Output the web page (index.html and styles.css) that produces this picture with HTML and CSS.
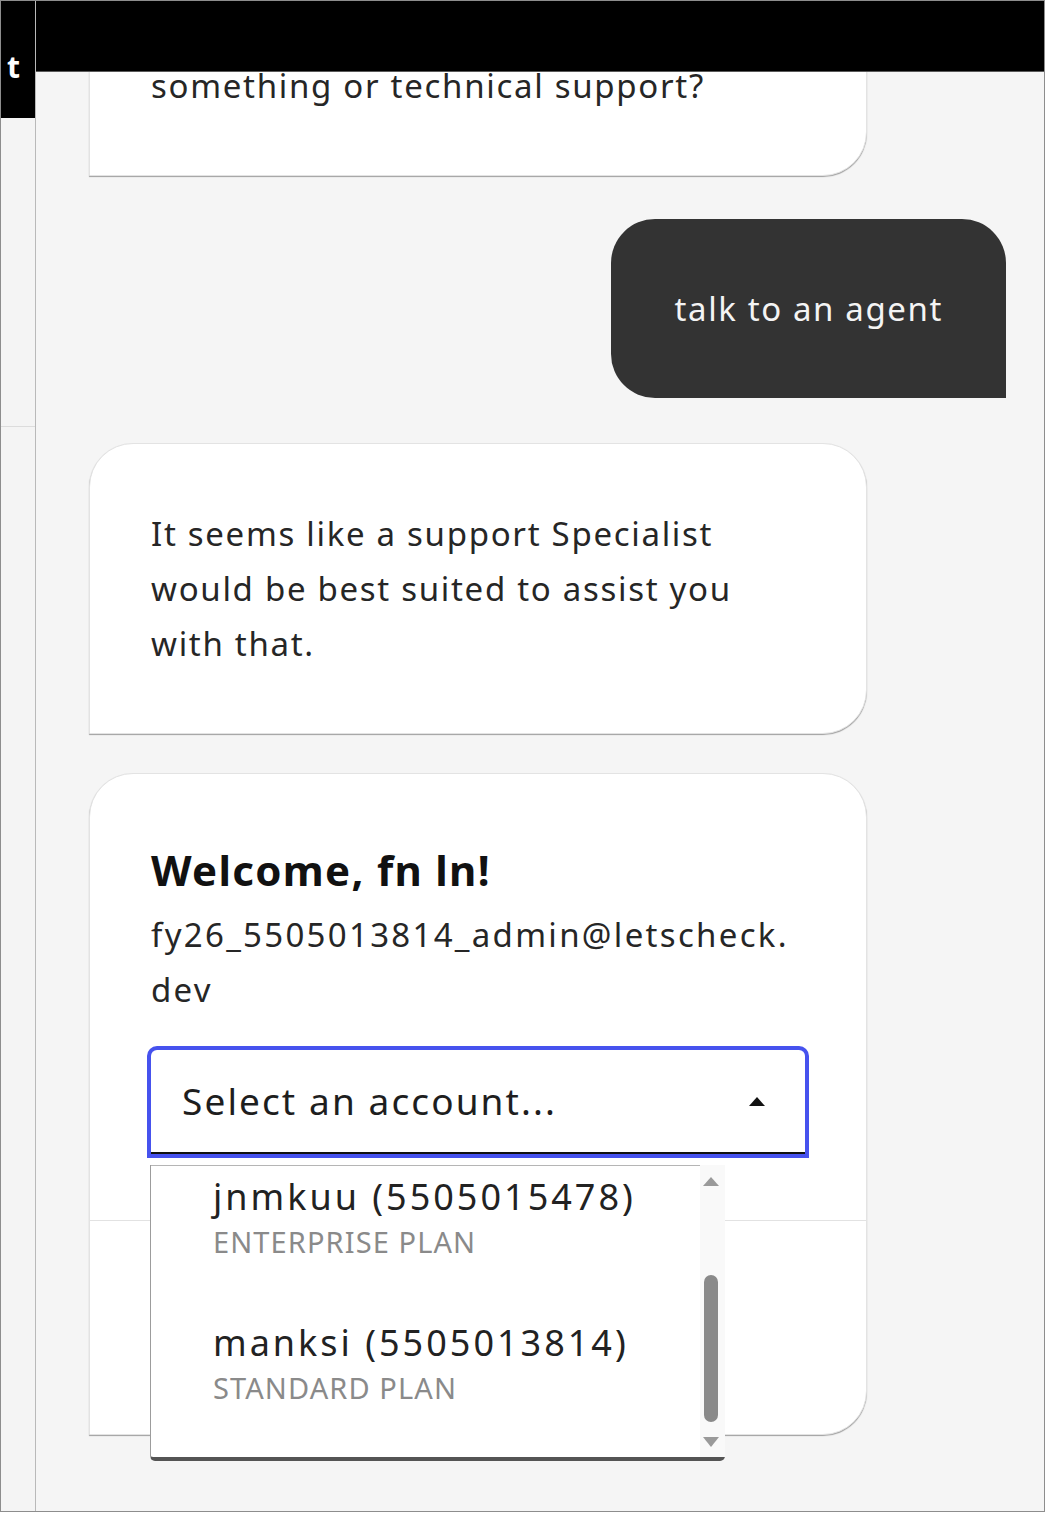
FILE: index.html
```html
<!DOCTYPE html>
<html lang="en">
<head>
<meta charset="utf-8">
<title>Chat</title>
<link rel="stylesheet" href="styles.css">
</head>
<body>
<div class="frame">
  <aside class="rail">
    <div class="rail-head"><span class="rail-title">t</span></div>
    <div class="rail-block"></div>
    <div class="rail-rest"></div>
  </aside>
  <main class="main">
    <header class="topbar"></header>
    <section class="chat">
      <div class="bubble bot first">
        <p class="msg">something or technical support?</p>
      </div>
      <div class="bubble user">
        <p class="msg">talk to an agent</p>
      </div>
      <div class="bubble bot">
        <p class="msg">It seems like a support Specialist would be best suited to assist you with that.</p>
      </div>
      <div class="bubble bot card">
        <div class="card-body">
          <h2 class="welcome">Welcome, fn ln!</h2>
          <p class="email">fy26_5505013814_admin@letscheck.<br>dev</p>
          <div class="select-wrap">
            <div class="select">
              <span class="select-label">Select an account...</span>
              <span class="caret"></span>
            </div>
            <div class="dropdown">
              <ul class="options">
                <li class="option">
                  <span class="opt-name">jnmkuu (5505015478)</span>
                  <span class="opt-plan">ENTERPRISE PLAN</span>
                </li>
                <li class="option">
                  <span class="opt-name">manksi (5505013814)</span>
                  <span class="opt-plan">STANDARD PLAN</span>
                </li>
              </ul>
              <div class="scrollbar">
                <span class="sb-up"></span>
                <span class="sb-thumb"></span>
                <span class="sb-down"></span>
              </div>
            </div>
          </div>
        </div>
        <div class="card-foot"></div>
      </div>
    </section>
  </main>
</div>
</body>
</html>
```

FILE: styles.css
```css
* { box-sizing: border-box; }
html, body { margin: 0; padding: 0; background: #ffffff; }
body {
  font-family: "Noto Sans", "Open Sans", sans-serif;
  color: #262626;
}
.frame {
  width: 1045px;
  height: 1512px;
  border: 1px solid #8d8d8d;
  display: flex;
  overflow: hidden;
  background: #f5f5f5;
}
.rail {
  width: 35px;
  flex: none;
  display: flex;
  flex-direction: column;
  border-right: 1px solid #b9b9b9;
  background: #f4f4f4;
}
.rail-head {
  height: 117px;
  background: #000;
  color: #fff;
  padding: 46px 0 0 6px;
  font-weight: 700;
  font-size: 30px;
  line-height: 40px;
}
.rail-block {
  height: 309px;
  border-bottom: 1px solid #dcdcdc;
}
.rail-rest { flex: 1; }
.main {
  flex: 1;
  display: flex;
  flex-direction: column;
  min-width: 0;
}
.topbar {
  height: 71px;
  flex: none;
  background: #000;
  border-bottom: 1px solid #5a5a5a;
  position: relative;
  z-index: 2;
}
.chat {
  flex: 1;
  overflow: hidden;
  display: flex;
  flex-direction: column;
  padding: 0 38px 0 53px;
}
.bubble {
  flex: none;
}
.msg {
  margin: 0;
  font-size: 33px;
  line-height: 55px;
  letter-spacing: 1.7px;
}
.bot {
  align-self: flex-start;
  width: 778px;
  background: #fff;
  border: 1px solid #e3e3e3;
  border-radius: 44px 44px 44px 0;
  box-shadow: 0 1px 1px rgba(0, 0, 0, 0.35);
  padding: 62px 61px;
}
.bot.first {
  margin-top: -77px;
}
.user {
  align-self: flex-end;
  background: #333333;
  color: #f4f4f4;
  border-radius: 44px 44px 0 44px;
  padding: 62px 63px 62px 64px;
  margin: 43px 0 45px;
}
.user .msg { letter-spacing: 1.6px; }
.bot + .bot { margin-top: 39px; }
.card {
  padding: 0;
}
.card-body {
  padding: 62px 61px 66px;
}
.welcome {
  margin: 0;
  font-size: 42px;
  line-height: 68px;
  font-weight: 700;
  letter-spacing: 1.3px;
  color: #111;
}
.email {
  margin: 3px 0 0;
  font-size: 33px;
  line-height: 55px;
  letter-spacing: 2.3px;
}
.select-wrap {
  position: relative;
  margin-top: 33px;
}
.select {
  height: 104px;
  display: flex;
  align-items: center;
  justify-content: space-between;
  padding: 0 40px 0 31px;
  background: #fff;
  border-bottom: 2px solid #111;
  border-radius: 6px 6px 0 0;
  box-shadow: 0 0 0 4px #4652ee;
}
.select-label {
  font-size: 37px;
  line-height: 50px;
  letter-spacing: 2.1px;
  color: #1e1e1e;
}
.caret {
  width: 0;
  height: 0;
  border-left: 8px solid transparent;
  border-right: 8px solid transparent;
  border-bottom: 9px solid #111;
}
.card-foot {
  height: 214px;
  border-top: 1px solid #e2e2e2;
}
.dropdown {
  position: absolute;
  top: calc(100% + 11px);
  left: -1px;
  width: 575px;
  height: 296px;
  z-index: 3;
  display: flex;
  background: #fff;
  border-left: 1px solid #9c9c9c;
  border-bottom: 4px solid #545454;
  border-radius: 0 0 5px 5px;
}
.options {
  list-style: none;
  margin: 0;
  padding: 0;
  flex: 1;
  overflow: hidden;
  border-top: 1px solid #b5b5b5;
}
.option {
  display: flex;
  flex-direction: column;
  padding: 28px 0 28px 62px;
}
.option:first-child { margin-top: -20px; }
.opt-name {
  font-size: 36px;
  line-height: 46px;
  letter-spacing: 3px;
  color: #222;
}
.opt-plan {
  font-size: 29px;
  line-height: 44px;
  color: #8a8a8a;
  letter-spacing: 1.1px;
}
.scrollbar {
  width: 25px;
  flex: none;
  display: flex;
  flex-direction: column;
  align-items: center;
  background: #f9f9f9;
  padding-top: 12px;
  padding-right: 4px;
}
.sb-up {
  width: 0;
  height: 0;
  border-left: 8px solid transparent;
  border-right: 8px solid transparent;
  border-bottom: 9px solid #9a9a9a;
}
.sb-thumb {
  width: 14px;
  height: 147px;
  margin-top: 89px;
  border-radius: 7px;
  background: #8a8a8a;
}
.sb-down {
  margin-top: 15px;
  width: 0;
  height: 0;
  border-left: 8px solid transparent;
  border-right: 8px solid transparent;
  border-top: 10px solid #9a9a9a;
}
```
